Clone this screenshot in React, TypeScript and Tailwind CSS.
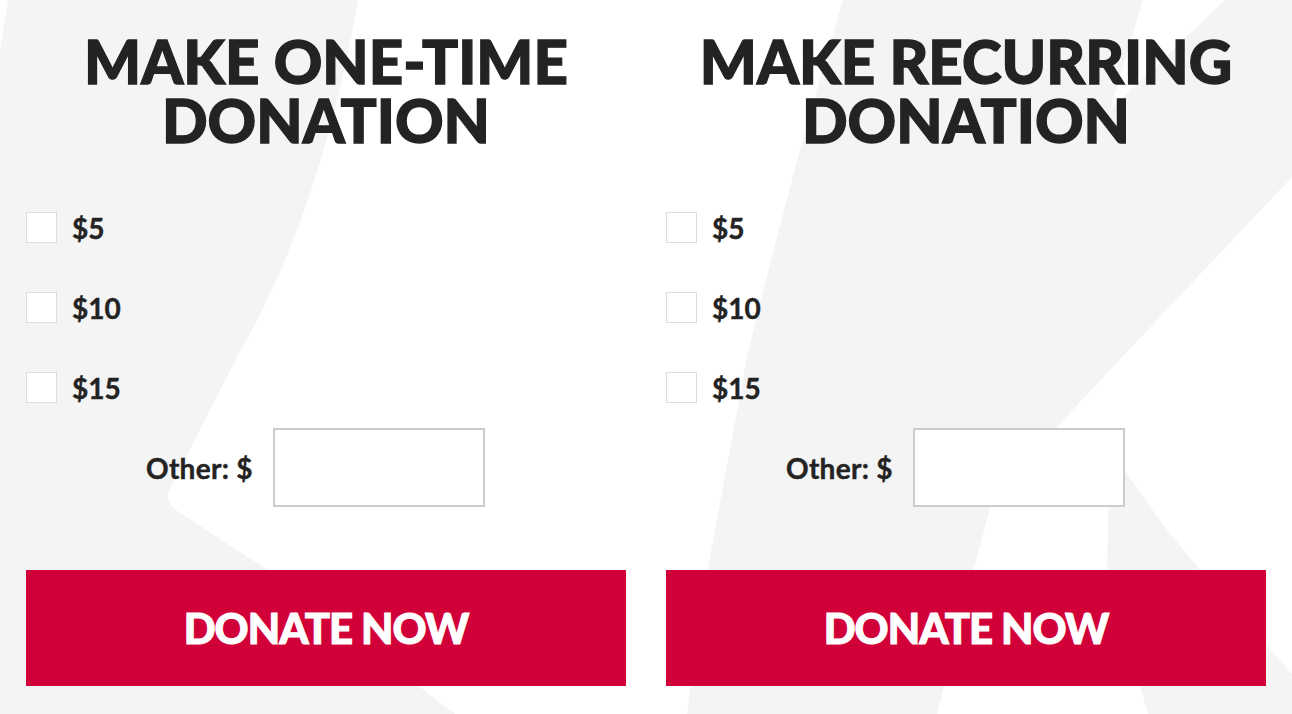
import React from 'react';

const AMOUNTS = ['$5', '$10', '$15'];

const DonationColumn: React.FC<{ title: [string, string] }> = ({ title }) => {
  return (
    <div className="flex flex-col">
      <h2 className="text-center text-[60px] leading-[59px] font-black uppercase text-[#232323] tracking-[0px] [-webkit-text-stroke:1.3px_#232323]">
        <span className="block">{title[0]}</span>
        <span className="block">{title[1]}</span>
      </h2>

      {/* amount choices */}
      <div className="mt-[62px] flex flex-col gap-[49px]">
        {AMOUNTS.map((amt) => (
          <label key={amt} className="flex items-center gap-[15px] cursor-pointer">
            <input
              type="checkbox"
              className="appearance-none w-[31px] h-[31px] border border-[#dcdcdc] bg-white"
            />
            <span className="text-[28px] leading-none font-bold text-[#232323] [-webkit-text-stroke:0.4px_#232323]">
              {amt}
            </span>
          </label>
        ))}
      </div>

      {/* other amount */}
      <div className="mt-[25px] ml-[120px] flex items-center gap-[20px]">
        <span className="text-[28px] leading-none font-bold text-[#232323] tracking-[0.3px] [-webkit-text-stroke:0.4px_#232323]">
          Other: $
        </span>
        <input
          type="text"
          className="w-[212px] h-[79px] border-2 border-[#cccccc] bg-white outline-none px-3 text-[24px]"
        />
      </div>

      <button className="mt-[63px] h-[116px] w-full bg-[#d20038] text-white text-[42px] font-black uppercase tracking-[-1px] [-webkit-text-stroke:1px_#ffffff]">
        Donate Now
      </button>
    </div>
  );
};

export default function App() {
  return (
    <div className="relative w-full h-[714px] overflow-hidden bg-white font-['Lato','Liberation_Sans',sans-serif]">
      {/* faint background lettering */}
      <svg
        className="absolute inset-0 w-full h-full"
        viewBox="0 0 1292 714"
        preserveAspectRatio="none"
      >
        <path
          fill="#f4f4f4"
          d="M0,50 L8,0 L358,0 Q322,210 237,357 L172,485 Q162,500 176,510 L263,567 L420,687 L455,714 L0,714 Z"
        />
        <path
          fill="#f4f4f4"
          d="M843,0 L1143,0 L1110,110 L1225,0 L1292,0 L1292,177 L1122,357 L1057,427 L990,507 L977,557 L937,714 L687,714 Q698,620 710,557 L747,357 Q792,170 843,0 Z"
        />
        <path
          fill="#f4f4f4"
          d="M1110,450 L1167,530 L1200,570 L1292,674 L1292,714 L1148,714 L1107,570 Z"
        />
      </svg>

      <div className="relative grid grid-cols-2 gap-[40px] px-[26px] pt-[32px]">
        <DonationColumn title={['Make One-Time', 'Donation']} />
        <DonationColumn title={['Make Recurring', 'Donation']} />
      </div>
    </div>
  );
}
